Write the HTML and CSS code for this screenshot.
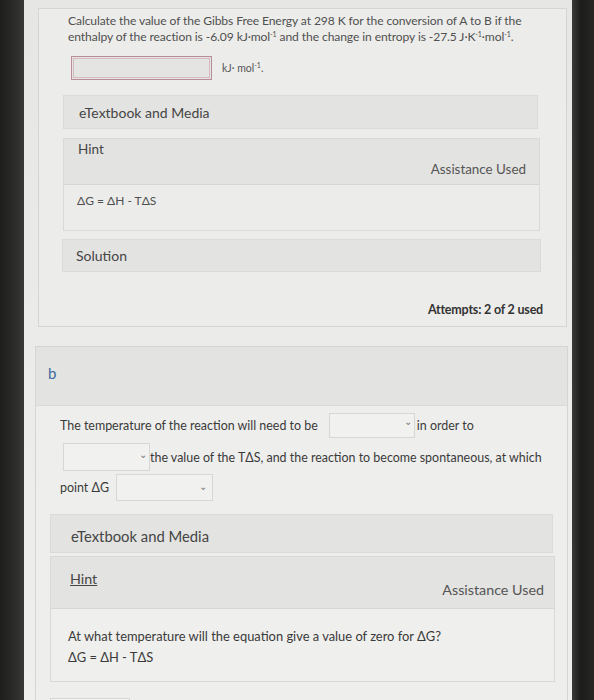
FILE: index.html
```html
<!DOCTYPE html>
<html>
<head>
<meta charset="utf-8">
<link rel="stylesheet" href="styles.css">
</head>
<body>
<div class="bezel-left"></div>
<div class="screen">
  <section class="card card-a">
    <p class="question">Calculate the value of the Gibbs Free Energy at 298 K for the conversion of A to B if the<br>enthalpy of the reaction is -6.09 kJ·mol<sup>-1</sup> and the change in entropy is -27.5 J·K<sup>-1</sup>·mol<sup>-1</sup>.</p>
    <div class="answer-row">
      <div class="answer-box"><div class="answer-inner"></div></div>
      <span class="unit">kJ· mol<sup>-1</sup>.</span>
    </div>
    <div class="bar etext">eTextbook and Media</div>
    <div class="hint-box">
      <div class="hint-head">
        <span class="hint-title">Hint</span>
        <span class="assist">Assistance Used</span>
      </div>
      <div class="hint-body small">ΔG = ΔH - TΔS</div>
    </div>
    <div class="bar solution">Solution</div>
    <div class="attempts">Attempts: 2 of 2 used</div>
  </section>

  <section class="card card-b">
    <div class="b-head"><span class="part-label">b</span></div>
    <div class="b-body">
      <div class="line line1">
        <span>The temperature of the reaction will need to be</span>
        <span class="select sel1"><span class="chev">⌄</span></span>
        <span>in order to</span>
      </div>
      <div class="line line2">
        <span class="select sel2"><span class="chev">⌄</span></span>
        <span>the value of the TΔS, and the reaction to become spontaneous, at which</span>
      </div>
      <div class="line line3">
        <span>point ΔG</span>
        <span class="select sel3"><span class="chev">⌄</span></span>
      </div>
      <div class="bar etext2">eTextbook and Media</div>
      <div class="hint-box hint2">
        <div class="hint-head">
          <span class="hint-title link">Hint</span>
          <span class="assist">Assistance Used</span>
        </div>
        <div class="hint-body">
          <div>At what temperature will the equation give a value of zero for ΔG?</div>
          <div>ΔG = ΔH - TΔS</div>
        </div>
      </div>
      <div class="stub"></div>
    </div>
  </section>
</div>
<div class="bezel-right"></div>
</body>
</html>
```

FILE: styles.css
```css
html, body {
  margin: 0;
  padding: 0;
}
body {
  width: 594px;
  height: 700px;
  overflow: hidden;
  display: flex;
  background: #232323;
  font-family: Lato, "Open Sans", "Liberation Sans", sans-serif;
  color: #3e3e3e;
}
.bezel-left {
  width: 24px;
  flex: none;
  background: linear-gradient(90deg, #1e1e1c 0%, #2e2e2c 70%, #3a3a38 100%);
}
.bezel-right {
  flex: 1;
  background: linear-gradient(90deg, #3a3a38 0%, #1c1c1b 40%, #262625 100%);
}
.screen {
  width: 548px;
  flex: none;
  height: 700px;
  background: linear-gradient(180deg, #e6e6e4 0%, #ebebe9 50%, #efefed 100%);
  overflow: hidden;
}
.card {
  border: 1px solid #d5d5d3;
  background: #ececea;
}
.card-a {
  margin: 8px 5px 0 14px;
  height: 319px;
  box-sizing: border-box;
}
.question {
  margin: 4px 0 0 29px;
  font-size: 12.1px;
  line-height: 16px;
  color: #505050;
  letter-spacing: -0.1px;
}
sup {
  font-size: 7px;
  vertical-align: 4px;
  line-height: 0;
}
.answer-row {
  display: flex;
  align-items: center;
  margin: 11px 0 0 32px;
}
.answer-box {
  width: 141px;
  height: 24px;
  box-sizing: border-box;
  border: 1px solid #b88d97;
  padding: 1px;
  background: #e4e4e2;
}
.answer-inner {
  height: 100%;
  box-sizing: border-box;
  border: 1px solid #d9b8c0;
}
.unit {
  margin-left: 10px;
  font-size: 10.5px;
  color: #555;
}
.bar {
  box-sizing: border-box;
  border: 1px solid #dbdbd9;
  background: #e3e3e1;
  font-size: 14px;
  color: #454545;
  display: flex;
  align-items: center;
}
.etext {
  margin: 15px 0 0 24px;
  width: 475px;
  height: 34px;
  padding-left: 15px;
}
.hint-box {
  margin: 9px 0 0 24px;
  width: 477px;
  box-sizing: border-box;
  border: 1px solid #d9d9d7;
  background: #ececea;
}
.hint-head {
  height: 46px;
  background: #e3e3e1;
  border-bottom: 1px solid #d6d6d4;
  position: relative;
  box-sizing: border-box;
}
.hint-title {
  position: absolute;
  left: 14px;
  top: 2px;
  font-size: 13.5px;
  color: #454545;
}
.assist {
  position: absolute;
  right: 13px;
  top: 22px;
  font-size: 13.4px;
  color: #555;
}
.hint-body {
  box-sizing: border-box;
}
.small {
  height: 45px;
  padding: 8px 0 0 13px;
  font-size: 12px;
  color: #505050;
}
.solution {
  margin: 8px 0 0 23px;
  width: 479px;
  height: 33px;
  padding-left: 13px;
}
.attempts {
  margin: 30px 0 0 0;
  width: 504px;
  text-align: right;
  font-size: 12.5px;
  font-weight: 700;
  color: #333;
  letter-spacing: -0.2px;
}
.card-b {
  margin: 19px 4px 0 11px;
  height: 360px;
  box-sizing: border-box;
  background: #eeeeec;
}
.b-head {
  height: 59px;
  background: #e3e3e1;
  border-bottom: 1px solid #dadad8;
  padding: 16px 0 0 12px;
  box-sizing: border-box;
}
.part-label {
  font-size: 15px;
  color: #3a6b9e;
}
.b-body {
  padding: 7px 0 0 14px;
  font-size: 12.45px;
  color: #3a3a3a;
}
.line {
  display: flex;
  align-items: center;
  padding-left: 10px;
}
.select {
  position: relative;
  display: block;
  box-sizing: border-box;
  background: #f1f1ef;
  border: 1px solid #d7d7d5;
}
.chev {
  position: absolute;
  right: 2px;
  top: 1px;
  font-size: 10px;
  color: #7a7a7a;
}
.line1 {
  height: 25px;
}
.sel1 {
  width: 86px;
  height: 25px;
  margin: 0 2px 0 11px;
}
.line2 {
  margin-top: 5px;
  height: 28px;
}
.sel2 {
  width: 87px;
  height: 28px;
  margin: 0 0 0 3px;
}
.line2 .chev {
  top: 4px;
}
.line3 {
  margin-top: 3px;
  height: 27px;
}
.sel3 {
  width: 97px;
  height: 27px;
  margin-left: 7px;
}
.line3 .chev {
  top: 5px;
  right: 5px;
}
.etext2 {
  margin: 13px 0 0 0;
  width: 503px;
  height: 39px;
  padding: 4px 0 0 20px;
  font-size: 14.8px;
}
.hint2 {
  margin: 3px 0 0 0;
  width: 505px;
  background: #efefed;
}
.hint2 .hint-head {
  height: 52px;
}
.hint2 .hint-title {
  left: 19px;
  top: 13px;
  font-size: 14.3px;
}
.link {
  text-decoration: underline;
}
.hint2 .assist {
  right: 10px;
  top: 24px;
  font-size: 14.3px;
}
.hint2 .hint-body {
  height: 72px;
  padding: 17px 0 0 17px;
  font-size: 12.9px;
  line-height: 21px;
  color: #3a3a3a;
}
.stub {
  margin: 16px 0 0 0;
  width: 78px;
  height: 10px;
  border: 1px solid #d7d7d5;
  border-bottom: none;
  background: #f3f3f1;
}
```
